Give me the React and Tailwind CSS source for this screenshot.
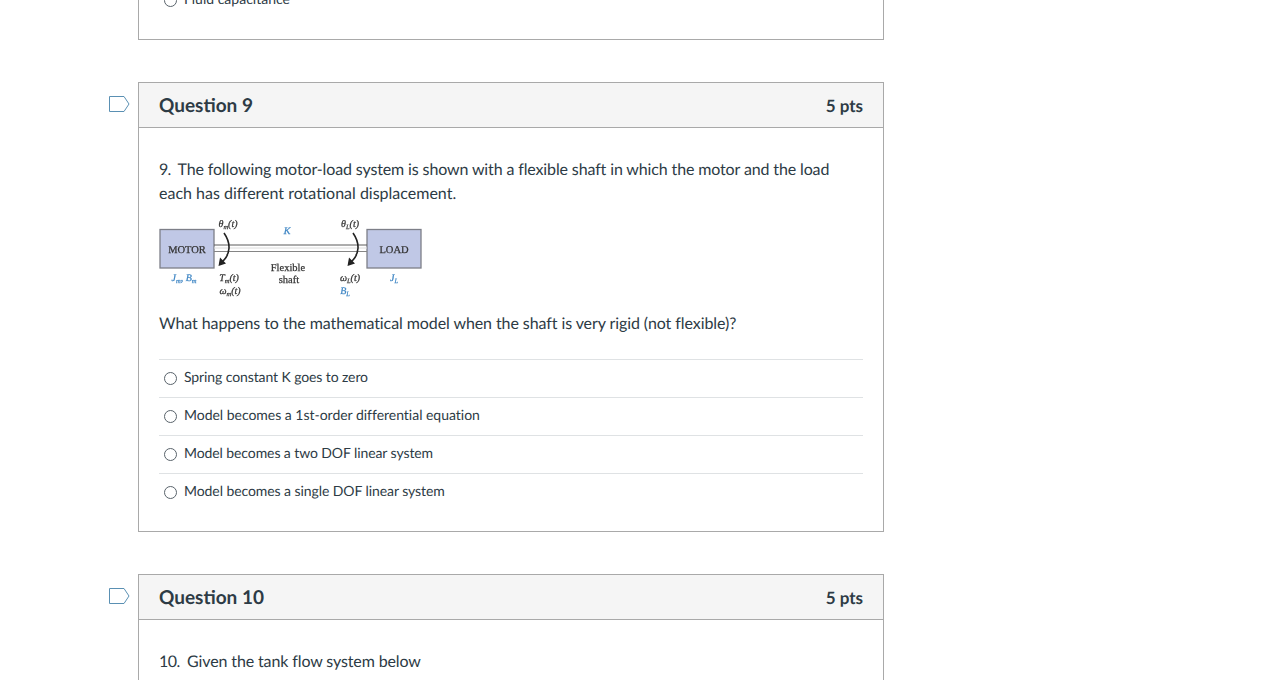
const ink = 'text-[#2d3b45]';

function Flag() {
  return (
    <svg className="absolute left-[-30px] top-[13px]" width="21" height="16" viewBox="0 0 21 16" fill="none">
      <path d="M0.5 0.5 H15 L20 8 L15 15.5 H0.5 Z" fill="#fff" stroke="#5a90b3" strokeWidth="1" />
    </svg>
  );
}

function Option({ label, track, last }) {
  return (
    <div className={`h-[38px] flex items-center pl-[5px] gap-[7px] border-b ${last ? 'border-transparent' : 'border-[#dfe2e4]'}`}>
      <span className="w-[13px] h-[13px] rounded-full border border-[#59636b] bg-white shrink-0" />
      <span className={`text-sm mt-[-3px] ${track} ${ink}`}>{label}</span>
    </div>
  );
}

function Header({ title }) {
  return (
    <div className={`h-[45px] bg-[#f5f5f5] border-b border-[#a9a9a9] px-5 flex items-center justify-between ${ink}`}>
      <h2 className="text-[19px] font-bold mt-[2px]">{title}</h2>
      <span className="text-[17px] font-bold mt-[2px]">5 pts</span>
    </div>
  );
}

// one label of the figure, heavier than plain svg text so it reads like the scaled image
function Label({ x, y, size = 10, color = '#333', italic = true, children }) {
  return (
    <text
      x={x}
      y={y}
      textAnchor="middle"
      fontSize={size}
      fontStyle={italic ? 'italic' : 'normal'}
      fill={color}
      stroke={color}
      strokeWidth="0.25"
    >
      {children}
    </text>
  );
}

// motor-load figure, slightly soft like the scaled image in the reference
function MotorDiagram() {
  const blue = '#3f86c4';
  const sub = (s) => <tspan fontSize="6.5" dy="2">{s}</tspan>;
  return (
    <svg className="blur-[0.5px]" width="264" height="86" viewBox="0 0 264 86" style={{ fontFamily: '"Liberation Serif", serif' }}>
      <rect x="1" y="14.5" width="54" height="38.5" fill="#c0c8e6" stroke="#7d7f88" strokeWidth="1.3" />
      <rect x="208" y="14.5" width="54" height="38.5" fill="#c0c8e6" stroke="#7d7f88" strokeWidth="1.3" />
      <path d="M55 30 H208" stroke="#5a5a5a" strokeWidth="1" />
      <path d="M55 36.5 H208" stroke="#858585" strokeWidth="1" />
      <path d="M55 33 H208" stroke="#dcdcdc" strokeWidth="1" />
      <path d="M65 18 C72 28 72 39 63 47" fill="none" stroke="#222" strokeWidth="1.6" />
      <path d="M59.5 51 L67 48.5 L61 42.5 Z" fill="#222" />
      <path d="M194 18 C201 28 201 39 192 47" fill="none" stroke="#222" strokeWidth="1.6" />
      <path d="M188.5 51 L196 48.5 L190 42.5 Z" fill="#222" />
      <Label x={28} y={38} size={10.5} italic={false}>MOTOR</Label>
      <Label x={235} y={38} size={10.5} italic={false}>LOAD</Label>
      <Label x={69} y={12}>θ{sub('m')}<tspan dy="-2">(t)</tspan></Label>
      <Label x={191} y={12}>θ{sub('L')}<tspan dy="-2">(t)</tspan></Label>
      <Label x={128} y={19} color={blue}>K</Label>
      <Label x={129} y={56} size={10.5} italic={false}>Flexible</Label>
      <Label x={130} y={68} size={10.5} italic={false}>shaft</Label>
      <Label x={25} y={66} color={blue}>J{sub('m')}<tspan dy="-2">, B</tspan>{sub('m')}</Label>
      <Label x={70} y={66}>T{sub('m')}<tspan dy="-2">(t)</tspan></Label>
      <Label x={71} y={79}>ω{sub('m')}<tspan dy="-2">(t)</tspan></Label>
      <Label x={191} y={66}>ω{sub('L')}<tspan dy="-2">(t)</tspan></Label>
      <Label x={186} y={79} color={blue}>B{sub('L')}</Label>
      <Label x={235} y={66} color={blue}>J{sub('L')}</Label>
    </svg>
  );
}

const answers = [
  { label: 'Spring constant K goes to zero', track: 'tracking-[-0.1px]' },
  { label: 'Model becomes a 1st-order differential equation', track: 'tracking-[-0.02px]' },
  { label: 'Model becomes a two DOF linear system', track: 'tracking-[-0.09px]' },
  { label: 'Model becomes a single DOF linear system', track: 'tracking-[-0.075px]' },
];

export default function App() {
  return (
    <div className="h-[680px] overflow-hidden bg-white pl-[138px] font-['Lato',sans-serif] [text-rendering:geometricPrecision]">
      {/* Previous question, scrolled mostly out of view */}
      <div className="w-[746px] h-[40px] border border-t-0 border-[#a9a9a9] overflow-hidden flex flex-col justify-start px-5">
        <div className="mt-[-14px] h-[26px] flex items-center pl-[5px] gap-[7px]">
          <span className="w-[13px] h-[13px] mt-[2px] rounded-full border border-[#59636b] shrink-0" />
          <span className={`text-sm ${ink}`}>Fluid capacitance</span>
        </div>
      </div>

      {/* Question 9 */}
      <div className="relative w-[746px] mt-[42px] border border-[#a9a9a9]">
        <Flag />
        <Header title="Question 9" />
        <div className="px-5 pt-[30px] pb-[19px]">
          <p className={`text-base leading-6 ${ink}`}>
            <span className="tracking-[-0.7px]">9.&nbsp; </span>
            <span className="tracking-[-0.13px]">The following motor-load system is shown with a flexible shaft in which the motor and the load</span>{' '}
            each has different rotational displacement.
          </p>
          <div className="mt-[9px] h-[97px]">
            <MotorDiagram />
          </div>
          <p className={`text-base leading-6 tracking-[-0.085px] ${ink}`}>
            What happens to the mathematical model when the shaft is very rigid (not flexible)?
          </p>
          <div className="mt-[23px] border-t border-[#dfe2e4]">
            {answers.map((a, i) => (
              <Option key={a.label} label={a.label} track={a.track} last={i === answers.length - 1} />
            ))}
          </div>
        </div>
      </div>

      {/* Question 10 */}
      <div className="relative w-[746px] mt-[42px] border border-[#a9a9a9]">
        <Flag />
        <Header title="Question 10" />
        <div className="px-5 pt-[30px] pb-5">
          <p className={`text-base leading-6 ${ink}`}>
            <span className="tracking-[-0.5px]">10.&nbsp; </span>
            <span className="tracking-[-0.12px]">Given the tank flow system below</span>
          </p>
        </div>
      </div>
    </div>
  );
}
